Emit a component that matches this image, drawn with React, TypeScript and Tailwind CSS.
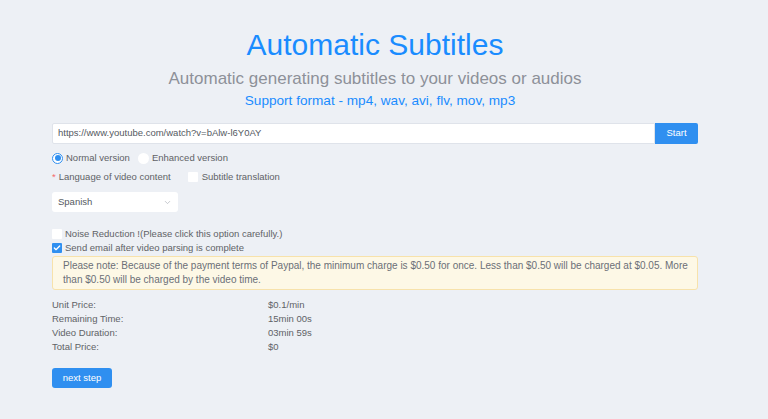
import { ChevronDown, Check } from "lucide-react";

const info = [
  { label: "Unit Price:", value: "$0.1/min" },
  { label: "Remaining Time:", value: "15min 00s" },
  { label: "Video Duration:", value: "03min 59s" },
  { label: "Total Price:", value: "$0" },
];

const App = () => {
  return (
    <div className="min-h-[419px] bg-[#edf0f5] font-['Liberation_Sans',Arial,sans-serif]">
      <div className="ml-[52px] w-[646px] pt-[27px]">
        {/* header */}
        <h1 className="text-center text-[30px] leading-[36px] text-[#1a8cff]">
          Automatic Subtitles
        </h1>
        <p className="mt-[5px] text-center text-[17px] leading-[22px] text-[#8d9199]">
          Automatic generating subtitles to your videos or audios
        </p>
        <p className="mt-[2px] pl-[10px] text-center text-[13.6px] leading-[18px] text-[#1a8cff]">
          Support format - mp4, wav, avi, flv, mov, mp3
        </p>

        {/* url input */}
        <div className="mt-[13px] flex h-[21px]">
          <div className="flex flex-1 items-center rounded-l-[2px] border border-[#dfe3ea] bg-white px-[5px] text-[9.5px] text-[#555a62]">
            https://www.youtube.com/watch?v=bAlw-l6Y0AY
          </div>
          <button className="w-[43px] rounded-r-[2px] bg-[#2f8ff0] text-[9.5px] text-white">
            Start
          </button>
        </div>

        {/* version radios */}
        <div className="mt-[7px] flex h-[14px] items-center text-[9.5px] text-[#606266]">
          <span className="mr-[3px] flex h-[11px] w-[11px] items-center justify-center rounded-full border border-[#2f8ff0] bg-white">
            <span className="h-[6px] w-[6px] rounded-full bg-[#2f8ff0]" />
          </span>
          <span>Normal version</span>
          <span className="ml-[8px] mr-[3px] h-[11px] w-[11px] rounded-full bg-white" />
          <span>Enhanced version</span>
        </div>

        {/* language + translation */}
        <div className="mt-[5px] flex h-[14px] items-center text-[9.5px] text-[#606266]">
          <span className="mr-[3px] text-[#f56c6c]">*</span>
          <span>Language of video content</span>
          <span className="ml-[17px] mr-[4px] h-[10px] w-[10px] rounded-[1px] bg-white" />
          <span>Subtitle translation</span>
        </div>

        {/* language select */}
        <div className="mt-[8px] flex h-[20px] w-[126px] items-center justify-between rounded-[3px] bg-white pl-[6px] pr-[6px] text-[9.5px] text-[#555a62]">
          <span>Spanish</span>
          <ChevronDown className="h-[9px] w-[9px] text-[#b4b8bf]" strokeWidth={2} />
        </div>

        {/* checkboxes */}
        <div className="mt-[15px] flex h-[14px] items-center text-[9.5px] text-[#606266]">
          <span className="mr-[3px] h-[10px] w-[10px] rounded-[1px] bg-white" />
          <span>Noise Reduction !(Please click this option carefully.)</span>
        </div>
        <div className="flex h-[14px] items-center text-[9.5px] text-[#606266]">
          <span className="mr-[3px] flex h-[10px] w-[10px] items-center justify-center rounded-[1px] bg-[#2f8ff0]">
            <Check className="h-[8px] w-[8px] text-white" strokeWidth={4} />
          </span>
          <span>Send email after video parsing is complete</span>
        </div>

        {/* notice */}
        <div className="mt-[1px] rounded-[3px] border border-[#f7e2ab] bg-[#fdf8e6] pl-[10px] pr-[4px] py-[2px] text-[10px] leading-[14px] text-[#6b6f77]">
          Please note: Because of the payment terms of Paypal, the minimum charge is $0.50 for once. Less than $0.50 will be
          charged at $0.05. More than $0.50 will be charged by the video time.
        </div>

        {/* price info */}
        <div className="mt-[8px] flex flex-col text-[9.5px] leading-[14px] text-[#606266]">
          {info.map((row) => (
            <div key={row.label} className="flex">
              <span className="w-[216px]">{row.label}</span>
              <span>{row.value}</span>
            </div>
          ))}
        </div>

        <button className="mt-[14px] h-[20px] w-[60px] rounded-[3px] bg-[#2f8ff0] text-[9.5px] text-white">
          next step
        </button>
      </div>
    </div>
  );
};

export default App;
